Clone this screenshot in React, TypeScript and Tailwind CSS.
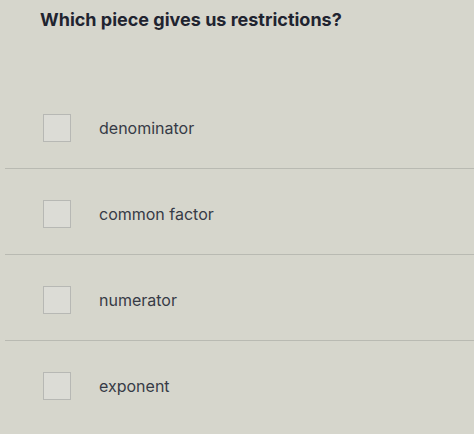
const options = ['denominator', 'common factor', 'numerator', 'exponent'];

export default function App() {
  return (
    <div
      className="w-[474px] h-[434px] overflow-hidden bg-[#d6d6cc] text-[#2d323c]"
      style={{ fontFamily: 'Inter, "Liberation Sans", sans-serif' }}
    >
      <h1 className="pl-[40px] pt-[6px] text-[18px] leading-[28px] font-bold text-[#1f2430]">
        Which piece gives us restrictions?
      </h1>
      <div className="mt-[49px] pl-[5px]">
        {options.map((opt, i) => (
          <div
            key={opt}
            className={`flex items-center gap-[28px] pl-[38px] pt-[31px] pb-[26px] ${
              i < options.length - 1 ? 'border-b border-[#b9bab2]' : ''
            }`}
          >
            <span className="w-[28px] h-[28px] border border-[#b7b8b4] bg-[#dcdcd6]" />
            <span className="text-[16px] leading-[24px] text-[#363b46]">{opt}</span>
          </div>
        ))}
      </div>
    </div>
  );
}
